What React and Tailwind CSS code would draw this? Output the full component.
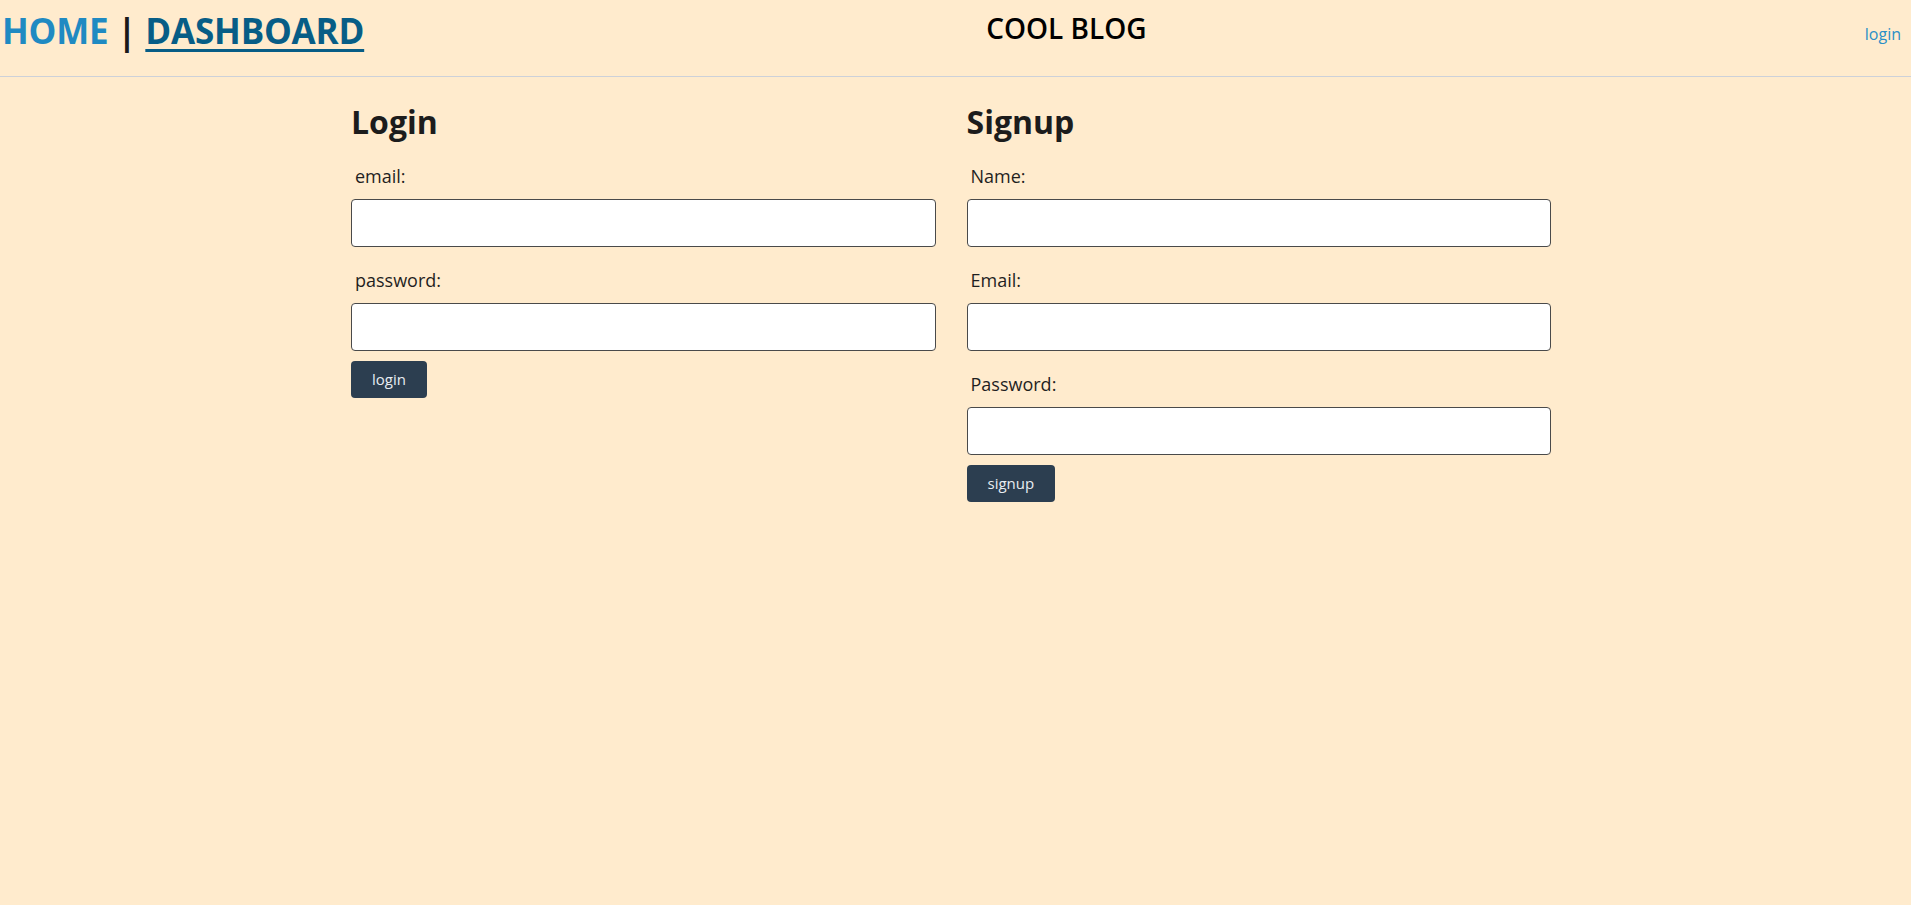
export default function App() {
  return (
    <div className="min-h-screen bg-[#ffebcd] font-['Open_Sans',sans-serif] text-[#1f1f1f]">
      <header className="flex items-start h-[77px] border-b border-[#cdd1d9]">
        <div className="pl-[2px] pt-[11px] text-[35px] font-bold leading-10 whitespace-nowrap tracking-[-0.2px]">
          <a href="#" className="text-[#1f8ac2]">HOME</a>
          <span className="text-[#1a1a1a]"> | </span>
          <a href="#" className="text-[#075d86] underline decoration-[3px] underline-offset-[5px]">DASHBOARD</a>
        </div>
        <h1 className="ml-[622px] pt-[10px] text-[28px] font-semibold leading-9 text-black whitespace-nowrap">
          COOL BLOG
        </h1>
        <div className="flex-1 flex justify-end pr-[10px] pt-[22px]">
          <a href="#" className="text-[16px] leading-6 text-[#2a8fc7]">login</a>
        </div>
      </header>

      <main className="ml-[351px] w-[1200px] grid grid-cols-2 gap-[31px] pt-[25px]">
        <section>
          <h2 className="text-[32px] font-bold leading-10 text-[#1c1c1c]">Login</h2>
          <form className="flex flex-col">
            <label className="mt-[22px] mb-[11px] pl-[4px] text-[18px] leading-6">email:</label>
            <input type="text" className="h-[48px] bg-white border border-[#4a4a4a] rounded-[4px]" />
            <label className="mt-[21px] mb-[11px] pl-[4px] text-[18px] leading-6">password:</label>
            <input type="password" className="h-[48px] bg-white border border-[#4a4a4a] rounded-[4px]" />
            <div className="mt-[10px]">
              <button type="button" className="h-[37px] px-[21px] rounded-[4px] bg-[#2c3e50] text-[15px] text-[#e8edf2]">login</button>
            </div>
          </form>
        </section>

        <section>
          <h2 className="text-[32px] font-bold leading-10 text-[#1c1c1c]">Signup</h2>
          <form className="flex flex-col">
            <label className="mt-[22px] mb-[11px] pl-[4px] text-[18px] leading-6">Name:</label>
            <input type="text" className="h-[48px] bg-white border border-[#4a4a4a] rounded-[4px]" />
            <label className="mt-[21px] mb-[11px] pl-[4px] text-[18px] leading-6">Email:</label>
            <input type="text" className="h-[48px] bg-white border border-[#4a4a4a] rounded-[4px]" />
            <label className="mt-[21px] mb-[11px] pl-[4px] text-[18px] leading-6">Password:</label>
            <input type="password" className="h-[48px] bg-white border border-[#4a4a4a] rounded-[4px]" />
            <div className="mt-[10px]">
              <button type="button" className="h-[37px] px-[21px] rounded-[4px] bg-[#2c3e50] text-[15px] text-[#e8edf2]">signup</button>
            </div>
          </form>
        </section>
      </main>
    </div>
  );
}
